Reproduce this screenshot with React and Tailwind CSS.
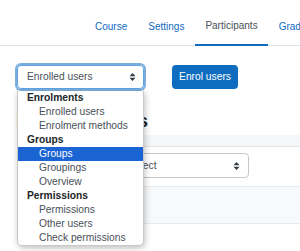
import React from 'react';

const font = { fontFamily: '"Liberation Sans", Arial, sans-serif' };

const tabs = [
  { label: 'Course' },
  { label: 'Settings' },
  { label: 'Participants', active: true },
  { label: 'Grades' },
];

const menu = [
  { label: 'Enrolments', header: true },
  { label: 'Enrolled users' },
  { label: 'Enrolment methods' },
  { label: 'Groups', header: true },
  { label: 'Groups', selected: true },
  { label: 'Groupings' },
  { label: 'Overview' },
  { label: 'Permissions', header: true },
  { label: 'Permissions' },
  { label: 'Other users' },
  { label: 'Check permissions' },
];

function Arrows() {
  return (
    <svg width="7" height="10" viewBox="0 0 7 10" className="shrink-0">
      <path d="M3.5 1 L6.5 4.2 H0.5 Z" fill="#343a40" />
      <path d="M3.5 9 L6.5 5.8 H0.5 Z" fill="#343a40" />
    </svg>
  );
}

export default function App() {
  return (
    <div className="relative w-[300px] h-[251px] overflow-hidden bg-white" style={font}>
      {/* Secondary nav */}
      <nav className="flex h-[46px] pl-[84.5px] border-b border-[#dee2e6] whitespace-nowrap">
        {tabs.map((t) => (
          <div
            key={t.label}
            className={`flex items-center h-[46px] -mb-px px-[10.5px] pt-[7px] text-[10px] ${
              t.active ? 'border-b-2 border-[#0f6cbf] text-[#495057]' : 'text-[#0f6cbf]'
            }`}
          >
            {t.label}
          </div>
        ))}
      </nav>

      {/* Action row */}
      <div className="flex items-center ml-[17px] mt-[19px] h-[24px]">
        <div className="flex items-center justify-between w-[127px] h-[24px] pl-[9px] pr-[7px] rounded-[4px] border border-[#5fa4e4] shadow-[0_0_0_2px_rgba(15,108,191,0.55)] text-[10.25px] text-[#495057]">
          <span>Enrolled users</span>
          <Arrows />
        </div>
        <button className="ml-[28px] w-[66px] h-[24px] rounded-[4px] bg-[#0f6cbf] text-white text-[10.25px]">
          Enrol users
        </button>
      </div>

      {/* Page content behind the menu */}
      <h2 className="mt-[20px] ml-[16px] text-[19px] leading-[24px] font-bold text-[#1d2125]">Enrolled users</h2>
      <div className="mt-[2px] ml-[20px] h-[12px] bg-[#f5f6f7] border-b border-[#e3e6e9]" />
      <div className="flex items-center justify-between mt-[6px] ml-[117px] w-[132px] h-[25px] pl-[10px] pr-[8px] rounded-[4px] border border-[#c4c8cd] text-[10.25px] text-[#495057]">
        <span>Select</span>
        <Arrows />
      </div>
      <div className="mt-[8px] ml-[20px] h-[38px] bg-[#f8f9fa] border-y border-[#e9ecef]" />

      {/* Open select menu */}
      <ul className="absolute left-[17px] top-[91px] w-[127px] bg-white border border-[#c8c8c8] border-t-0 rounded-b-[5px] shadow-[1px_2px_6px_rgba(0,0,0,0.25)] overflow-hidden text-[10.25px] leading-[14px]">
        {menu.map((m, i) => (
          <li
            key={i}
            className={`h-[14px] whitespace-nowrap ${
              m.header
                ? 'pl-[9px] font-bold text-[#212529]'
                : m.selected
                ? 'pl-[21px] bg-[#1a64d4] text-white'
                : 'pl-[21px] text-[#495057]'
            }`}
          >
            {m.label}
          </li>
        ))}
      </ul>
    </div>
  );
}
